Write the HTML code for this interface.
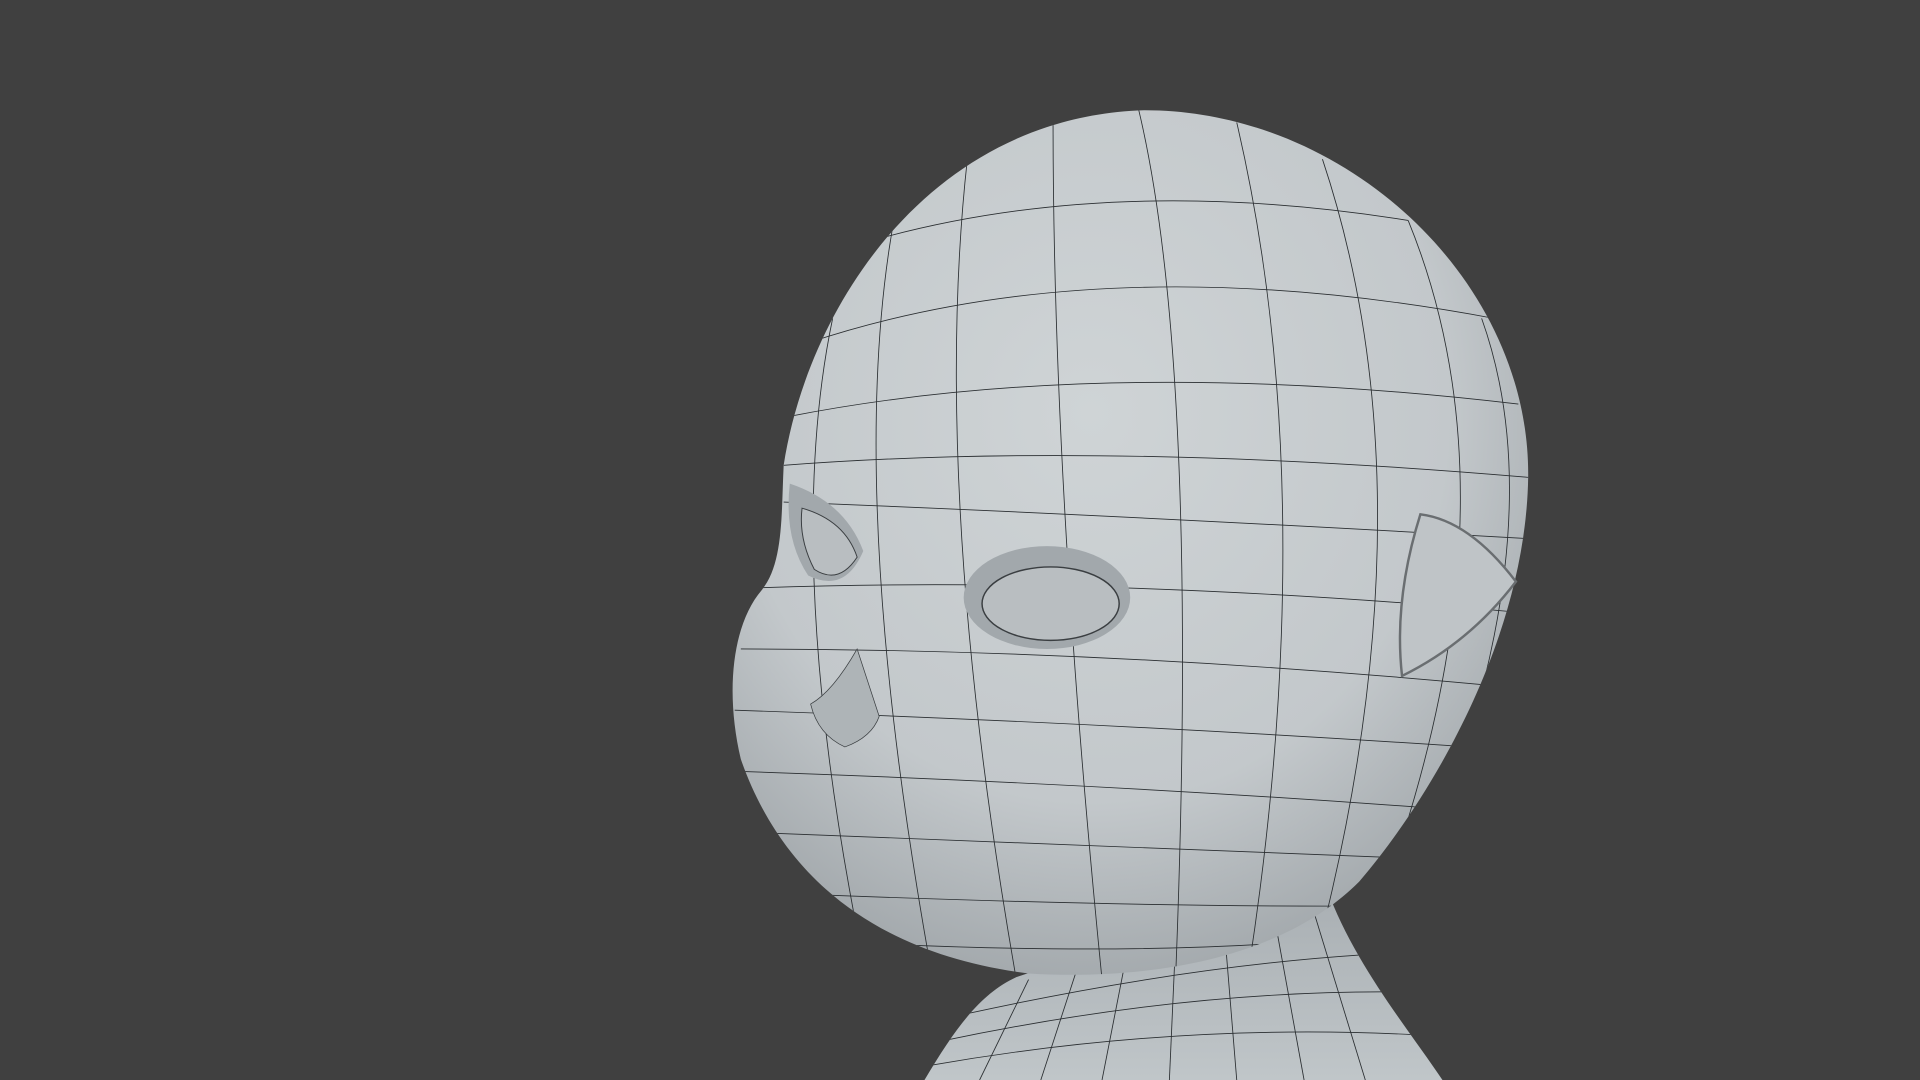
<!DOCTYPE html>
<html><head><meta charset="utf-8"><style>
html,body{margin:0;padding:0;background:#404040;width:1920px;height:1080px;overflow:hidden}
svg{display:block}
</style></head><body>
<svg width="1920" height="1080" viewBox="0 0 1568 882" preserveAspectRatio="none" xmlns="http://www.w3.org/2000/svg">
<defs>
<radialGradient id="hg" cx="0.45" cy="0.35" r="0.75">
<stop offset="0" stop-color="#cfd4d6"/>
<stop offset="0.6" stop-color="#c3c8cb"/>
<stop offset="1" stop-color="#969ca0"/>
</radialGradient>
<linearGradient id="ng" x1="0" y1="0" x2="0" y2="1">
<stop offset="0" stop-color="#a7adb1"/>
<stop offset="1" stop-color="#c0c6c9"/>
</linearGradient>
<clipPath id="hc"><path d="M935 90 C1100 90 1250 230 1248 390 C1246 520 1170 650 1110 720 C1040 790 920 800 840 795 C720 780 640 720 605 620 C592 565 598 510 622 482 C640 460 638 420 640 380 C660 250 760 95 935 90 Z"/></clipPath>
<clipPath id="nc"><path d="M755 882 C780 840 800 812 830 798 L1080 715 C1100 780 1150 840 1178 882 Z"/></clipPath>
</defs>
<rect width="1568" height="882" fill="#404040"/>
<path d="M755 882 C780 840 800 812 830 798 L1080 715 C1100 780 1150 840 1178 882 Z" fill="url(#ng)"/>
<g clip-path="url(#nc)" stroke="#2a2e31" stroke-width="0.7" fill="none">
<path d="M780 830 Q960 790 1110 780"/><path d="M770 850 Q960 810 1130 810"/><path d="M760 870 Q960 835 1155 845"/>
<path d="M840 800 L800 882"/><path d="M880 790 L850 882"/><path d="M920 780 L900 882"/><path d="M960 770 L955 882"/><path d="M1000 760 L1010 882"/><path d="M1040 745 L1065 882"/><path d="M1070 735 L1115 882"/>
</g>
<path d="M935 90 C1100 90 1250 230 1248 390 C1246 520 1170 650 1110 720 C1040 790 920 800 840 795 C720 780 640 720 605 620 C592 565 598 510 622 482 C640 460 638 420 640 380 C660 250 760 95 935 90 Z" fill="url(#hg)"/>
<g clip-path="url(#hc)" stroke="#2a2e31" stroke-width="0.7" fill="none">
<path d="M700 200 Q900 140 1150 180"/><path d="M660 280 Q900 200 1220 260"/><path d="M645 340 Q900 290 1240 330"/>
<path d="M640 380 Q900 360 1250 390"/><path d="M640 410 Q900 420 1250 440"/><path d="M620 480 Q900 470 1240 500"/>
<path d="M605 530 Q900 530 1220 560"/><path d="M600 580 Q900 590 1200 610"/><path d="M605 630 Q900 640 1170 660"/>
<path d="M620 680 Q900 690 1130 700"/><path d="M650 730 Q900 740 1090 740"/><path d="M700 770 Q900 780 1050 770"/>
<path d="M930 90 Q980 300 960 800"/><path d="M860 100 Q860 400 900 800"/><path d="M790 130 Q760 400 830 800"/>
<path d="M730 180 Q690 400 760 790"/><path d="M680 260 Q640 450 700 760"/><path d="M1010 100 Q1080 400 1020 790"/>
<path d="M1080 130 Q1170 400 1080 760"/><path d="M1150 180 Q1240 400 1140 700"/><path d="M1210 260 Q1260 400 1200 600"/>
</g>
<ellipse cx="855" cy="488" rx="68" ry="42" fill="#a2a8ac"/>
<ellipse cx="858" cy="493" rx="56" ry="30" fill="#b9bec1" stroke="#3a3e41" stroke-width="1.2"/>
<path d="M645 395 Q690 410 705 450 Q690 485 660 470 Q640 440 645 395 Z" fill="#a2a8ac"/>
<path d="M655 415 Q690 425 700 455 Q685 478 665 465 Q652 440 655 415 Z" fill="#b9bec1" stroke="#3a3e41" stroke-width="0.8"/>
<path d="M700 530 Q680 565 662 575 Q668 600 690 610 Q712 602 718 585 Z" fill="#aeb4b7" stroke="#3a3e41" stroke-width="0.6"/>
<path d="M1160 420 Q1200 425 1238 475 Q1200 525 1145 552 Q1138 490 1160 420 Z" fill="#bfc4c7" stroke="#6a6e71" stroke-width="2"/>
</svg>
</body></html>
